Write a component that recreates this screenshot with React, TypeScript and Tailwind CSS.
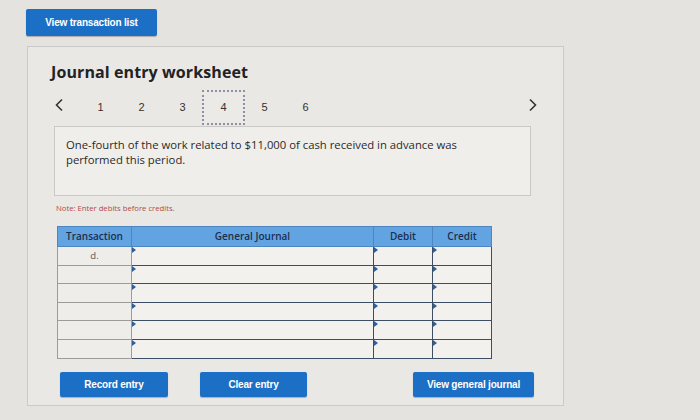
import React from 'react';

const rows = ['d.', '', '', '', '', ''];

const Tri = () => (
  <span className="absolute left-0 top-0 h-0 w-0 border-y-[3px] border-l-[4px] border-y-transparent border-l-[#2f5f9a]" />
);

const Chevron: React.FC<{ dir: 'l' | 'r' }> = ({ dir }) => (
  <svg width="10" height="14" viewBox="0 0 10 14" className="text-[#333]">
    <polyline
      points={dir === 'l' ? '8,1.5 2.5,7 8,12.5' : '2,1.5 7.5,7 2,12.5'}
      fill="none"
      stroke="currentColor"
      strokeWidth="1.6"
    />
  </svg>
);

const BlueButton: React.FC<{ label: string; w: string }> = ({ label, w }) => (
  <button
    className={`${w} h-[25px] rounded-[2px] bg-[#1b6fc5] text-white text-[10px] font-bold tracking-[-0.2px] shadow-[0_1px_1px_rgba(0,0,0,0.25)]`}
    style={{ fontFamily: '"Liberation Sans", Arial, sans-serif' }}
  >
    {label}
  </button>
);

export default function App() {
  return (
    <div
      className="w-[700px] h-[420px] overflow-hidden bg-[#e4e3e0] pt-[9px]"
      style={{ fontFamily: '"Open Sans", "DejaVu Sans", sans-serif' }}
    >
      <div className="flex pl-[26px]">
        <BlueButton label="View transaction list" w="w-[131px] h-[27px]" />
      </div>

      <div className="ml-[27px] mt-[10px] w-[537px] h-[360px] border border-[#cbcac6] bg-[#e9e8e5] pl-[23px] pt-[14px]">
        <h1 className="text-[16px] leading-[22px] font-bold text-[#222] tracking-[0.1px]">Journal entry worksheet</h1>

        <div className="mt-[7px] flex h-[35px] items-start text-[11px] text-[#333]">
          <span className="mt-[8px] ml-[3px] w-[26px]">
            <Chevron dir="l" />
          </span>
          <div className="flex" style={{ fontFamily: '"Liberation Sans", Arial, sans-serif' }}>
            {[1, 2, 3, 4, 5, 6].map((n) =>
              n === 4 ? (
                <div
                  key={n}
                  className="mx-[-1px] flex h-[35px] w-[43px] justify-center border-[2px] border-dotted border-[#8e8ea4] bg-[#eceae7] pt-[7px]"
                >
                  {n}
                </div>
              ) : (
                <div key={n} className="flex w-[41px] justify-center pt-[9px]">
                  {n}
                </div>
              )
            )}
          </div>
          <span className="mt-[8px] ml-auto mr-[25px]">
            <Chevron dir="r" />
          </span>
        </div>

        <div className="ml-[3px] mt-[1px] h-[70px] w-[477px] border border-[#c9c8c4] bg-[#efeeeb] pl-[11px] pt-[10px] text-[11.3px] leading-[15px] text-[#2a2a2a]">
          One-fourth of the work related to $11,000 of cash received in advance was
          <br />
          performed this period.
        </div>

        <p className="ml-[5px] mt-[7px] text-[7.7px] leading-[10px] font-medium text-[#b24a49]">Note: Enter debits before credits.</p>

        <table className="ml-[6px] mt-[13px] w-[435px] border-collapse text-[10px]">
          <thead>
            <tr className="h-[20px] bg-[#62a3e2] text-[#1d2f4e]">
              <th className="w-[74px] border border-[#4f86bf] font-semibold">Transaction</th>
              <th className="w-[242px] border border-[#4f86bf] font-semibold">General Journal</th>
              <th className="w-[59px] border border-[#4f86bf] font-semibold">Debit</th>
              <th className="w-[59px] border border-[#4f86bf] font-semibold">Credit</th>
            </tr>
          </thead>
          <tbody>
            {rows.map((t, i) => (
              <tr key={i} className="h-[18.6px]">
                <td className="border border-[#9d9c98] bg-[#eeede9] text-center text-[9.5px] text-[#555]">{t}</td>
                {[0, 1, 2].map((c) => (
                  <td key={c} className="relative border-[1.5px] border-[#3e4d66] bg-[#f2f1ee] p-0">
                    <Tri />
                  </td>
                ))}
              </tr>
            ))}
          </tbody>
        </table>

        <div className="mt-[13px] flex items-center gap-[32px] pl-[9px]">
          <BlueButton label="Record entry" w="w-[108px]" />
          <BlueButton label="Clear entry" w="w-[107px]" />
          <div className="ml-[74px] flex">
            <BlueButton label="View general journal" w="w-[121px]" />
          </div>
        </div>
      </div>
    </div>
  );
}
